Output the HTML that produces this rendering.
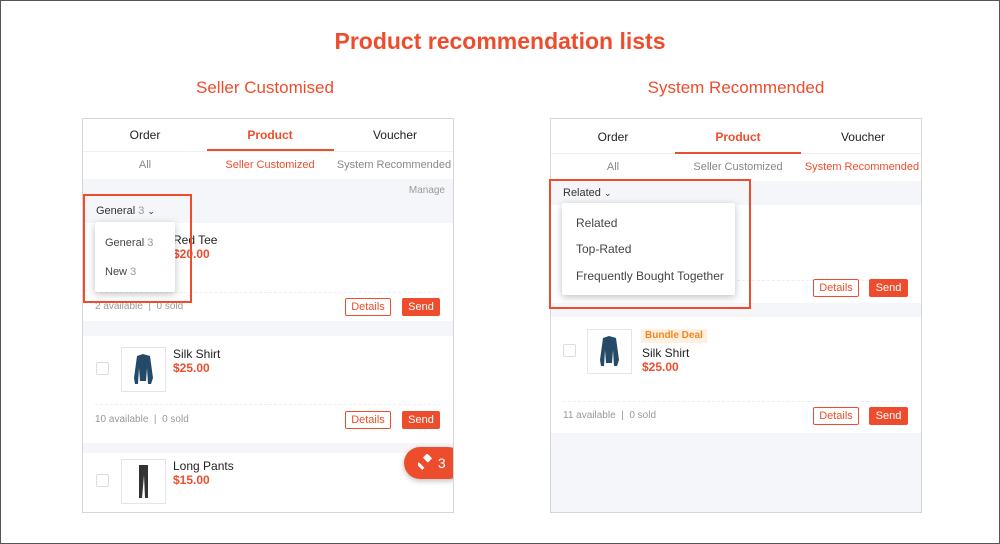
<!DOCTYPE html>
<html><head><style>
*{box-sizing:border-box;margin:0;padding:0}
body{width:1000px;height:544px;background:#fff;font-family:"Liberation Sans",Arial,sans-serif;position:relative;overflow:hidden}
.a{position:absolute}
.frame{left:0;top:0;width:1000px;height:544px;border:1px solid #555}
.panel{border:1px solid #d6d6d6;background:#f5f6fa;overflow:hidden}
.tab{font-size:12px;color:#222;text-align:center;width:124px}
.sub{font-size:11px;color:#888;text-align:center;width:124px}
.t{color:#ee4d2d !important}
.card{background:#fff}
.btnD{border:1px solid #ee4d2d;color:#ee4d2d;font-size:11px;height:18px;border-radius:2px;background:#fff;display:flex;align-items:center;justify-content:center}
.btnS{background:#ee4d2d;color:#fff;font-size:11px;height:18px;border-radius:2px;display:flex;align-items:center;justify-content:center}
.foot{font-size:10px;color:#999}
.cb{width:13px;height:13px;border:1px solid #ddd;border-radius:2px;background:#fff}
.img{width:45px;height:45px;border:1px solid #e5e5e5;background:#fff}
.nm{font-size:12px;color:#222}
.pr{font-size:12px;font-weight:bold;color:#ee4d2d}
.sep{border-top:1px dashed #eee;height:0}
.dd{background:#fff;box-shadow:0 2px 8px rgba(0,0,0,.25);border-radius:2px}
.ddi{font-size:11px;color:#444}
.rbox{border:2px solid #ee4d2d}
</style></head><body>
<div class="a frame"></div>
<div class="a t" style="left:0;width:1000px;top:28px;text-align:center;font-size:23px;font-weight:bold">Product recommendation lists</div>
<div class="a t" style="left:165px;width:200px;top:78px;text-align:center;font-size:17px">Seller Customised</div>
<div class="a t" style="left:616px;width:240px;top:78px;text-align:center;font-size:17px">System Recommended</div>

<!-- LEFT -->
<div class="a panel" style="left:82px;top:118px;width:372px;height:395px">
 <div class="a card" style="left:0;top:0;width:372px;height:60px"></div>
 <div class="a" style="left:0;top:32px;width:372px;border-top:1px solid #f0f0f0"></div>
 <div class="a tab" style="left:0;top:9px">Order</div>
 <div class="a tab t" style="left:125px;top:9px;font-weight:bold">Product</div>
 <div class="a tab" style="left:250px;top:9px">Voucher</div>
 <div class="a" style="left:124px;top:30px;width:127px;height:2px;background:#ee4d2d"></div>
 <div class="a sub" style="left:0;top:40px">All</div>
 <div class="a sub t" style="left:125px;top:40px">Seller Customized</div>
 <div class="a sub" style="left:250px;top:40px;width:122px">System Recommended</div>
 <div class="a" style="right:8px;top:66px;font-size:10px;color:#999">Manage</div>
 <div class="a" style="left:13px;top:86px;font-size:11px;color:#333">General <span style="color:#999">3</span> <span style="font-size:9px">⌄</span></div>
 <div class="a card" style="left:0;top:104px;width:372px;height:98px">
  <div class="a nm" style="left:90px;top:10px">Red Tee</div>
  <div class="a pr" style="left:90px;top:24px">$20.00</div>
  <div class="a sep" style="left:12px;top:69px;width:346px"></div>
  <div class="a foot" style="left:12px;top:78px">2 available &nbsp;|&nbsp; 0 sold</div>
  <div class="a btnD" style="left:262px;top:75px;width:46px">Details</div>
  <div class="a btnS" style="left:319px;top:75px;width:38px">Send</div>
 </div>
 <div class="a card" style="left:0;top:217px;width:372px;height:107px">
  <div class="a cb" style="left:13px;top:26px"></div>
  <div class="a img" style="left:38px;top:11px"><svg width="43" height="43"><path d="M15 8 L21 6 L28 8 L31 30 L29 36 L26 36 L25 20 L24 33 L18 33 L17 20 L16 36 L13 36 L12 30Z" fill="#244a68"/></svg></div>
  <div class="a nm" style="left:90px;top:11px">Silk Shirt</div>
  <div class="a pr" style="left:90px;top:25px">$25.00</div>
  <div class="a sep" style="left:12px;top:68px;width:346px"></div>
  <div class="a foot" style="left:12px;top:78px">10 available &nbsp;|&nbsp; 0 sold</div>
  <div class="a btnD" style="left:262px;top:75px;width:46px">Details</div>
  <div class="a btnS" style="left:319px;top:75px;width:38px">Send</div>
 </div>
 <div class="a card" style="left:0;top:334px;width:372px;height:61px">
  <div class="a cb" style="left:13px;top:21px"></div>
  <div class="a img" style="left:38px;top:6px"><svg width="43" height="43"><path d="M17 5 L26 5 L26 38 L23 38 L22 15 L20 38 L17 38Z" fill="#333"/></svg></div>
  <div class="a nm" style="left:90px;top:6px">Long Pants</div>
  <div class="a pr" style="left:90px;top:20px">$15.00</div>
 </div>
 <div class="a" style="left:321px;top:328px;width:60px;height:32px;background:#ee4d2d;border-radius:16px;box-shadow:0 2px 6px rgba(0,0,0,.25);color:#fff;font-size:14px;line-height:32px;padding-left:14px">
  <svg width="16" height="16" viewBox="0 0 16 16" style="vertical-align:-2px"><g fill="#fff"><rect x="6" y="1" width="7" height="6" transform="rotate(45 9.5 4)"/><rect x="1" y="8" width="3" height="8" transform="rotate(-45 2.5 12)"/></g></svg> 3</div>
</div>
<div class="a rbox" style="left:83px;top:194px;width:109px;height:109px"></div>
<div class="a dd" style="left:95px;top:222px;width:80px;height:70px">
 <div class="a ddi" style="left:10px;top:15px">General <span style="color:#999">3</span></div>
 <div class="a ddi" style="left:10px;top:44px">New <span style="color:#999">3</span></div>
</div>

<!-- RIGHT -->
<div class="a panel" style="left:550px;top:118px;width:372px;height:395px">
 <div class="a card" style="left:0;top:0;width:372px;height:62px"></div>
 <div class="a" style="left:0;top:34px;width:372px;border-top:1px solid #f0f0f0"></div>
 <div class="a tab" style="left:0;top:11px">Order</div>
 <div class="a tab t" style="left:125px;top:11px;font-weight:bold">Product</div>
 <div class="a tab" style="left:250px;top:11px">Voucher</div>
 <div class="a" style="left:124px;top:33px;width:126px;height:2px;background:#ee4d2d"></div>
 <div class="a sub" style="left:0;top:42px">All</div>
 <div class="a sub" style="left:125px;top:42px">Seller Customized</div>
 <div class="a sub t" style="left:250px;top:42px;width:122px">System Recommended</div>
 <div class="a" style="left:12px;top:68px;font-size:11px;color:#333">Related <span style="font-size:9px">⌄</span></div>
 <div class="a card" style="left:0;top:86px;width:372px;height:98px">
  <div class="a sep" style="left:12px;top:75px;width:346px"></div>
  <div class="a btnD" style="left:262px;top:74px;width:46px">Details</div>
  <div class="a btnS" style="left:318px;top:74px;width:39px">Send</div>
 </div>
 <div class="a card" style="left:0;top:198px;width:372px;height:116px">
  <div class="a cb" style="left:12px;top:27px"></div>
  <div class="a img" style="left:36px;top:12px"><svg width="43" height="43"><path d="M15 8 L21 6 L28 8 L31 30 L29 36 L26 36 L25 20 L24 33 L18 33 L17 20 L16 36 L13 36 L12 30Z" fill="#244a68"/></svg></div>
  <div class="a" style="left:90px;top:12px;height:14px;padding:0 4px;background:#fff0e0;color:#f5841f;font-size:10px;font-weight:bold;line-height:14px">Bundle Deal</div>
  <div class="a nm" style="left:91px;top:29px">Silk Shirt</div>
  <div class="a pr" style="left:91px;top:43px">$25.00</div>
  <div class="a sep" style="left:12px;top:84px;width:346px"></div>
  <div class="a foot" style="left:12px;top:93px">11 available &nbsp;|&nbsp; 0 sold</div>
  <div class="a btnD" style="left:262px;top:90px;width:46px">Details</div>
  <div class="a btnS" style="left:318px;top:90px;width:39px">Send</div>
 </div>
</div>
<div class="a rbox" style="left:549px;top:179px;width:202px;height:130px"></div>
<div class="a dd" style="left:562px;top:203px;width:173px;height:92px">
 <div class="a ddi" style="left:14px;top:13px;font-size:12px">Related</div>
 <div class="a ddi" style="left:14px;top:39px;font-size:12px">Top-Rated</div>
 <div class="a ddi" style="left:14px;top:66px;font-size:12px">Frequently Bought Together</div>
</div>
</body></html>
